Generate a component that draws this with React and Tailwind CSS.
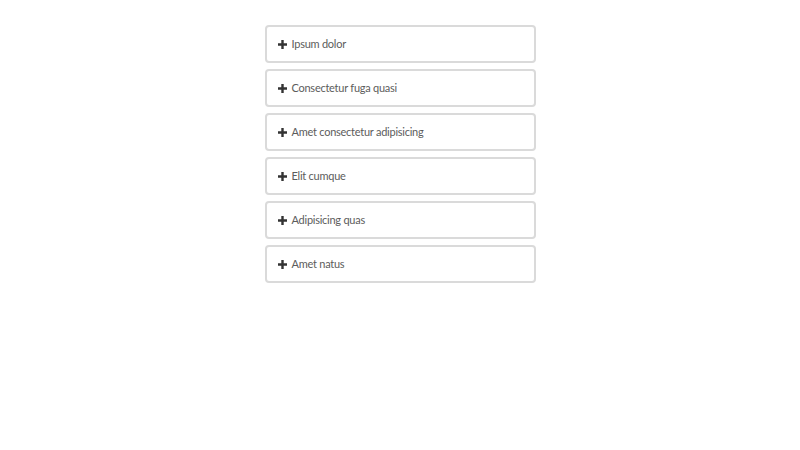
const ITEMS = [
  'Ipsum dolor',
  'Consectetur fuga quasi',
  'Amet consectetur adipisicing',
  'Elit cumque',
  'Adipisicing quas',
  'Amet natus',
];

function PlusIcon() {
  return (
    <svg width="9" height="9" viewBox="0 0 9 9" className="shrink-0">
      <path d="M3.3 0h2.4v3.3H9v2.4H5.7V9H3.3V5.7H0V3.3h3.3z" fill="#333" />
    </svg>
  );
}

export default function App() {
  return (
    <div className="min-h-screen bg-white pt-[25px]" style={{ fontFamily: 'Lato, "Open Sans", sans-serif' }}>
      <div className="mx-auto flex w-[271px] flex-col gap-[6px]">
        {ITEMS.map((item) => (
          <button
            key={item}
            className="flex h-[38px] items-center gap-[5px] rounded-[4px] border-2 border-[#dadada] bg-white pl-[11px] pr-3 text-left text-[11px] tracking-[-0.25px] text-[#5c5c5c]"
          >
            <PlusIcon />
            <span>{item}</span>
          </button>
        ))}
      </div>
    </div>
  );
}
